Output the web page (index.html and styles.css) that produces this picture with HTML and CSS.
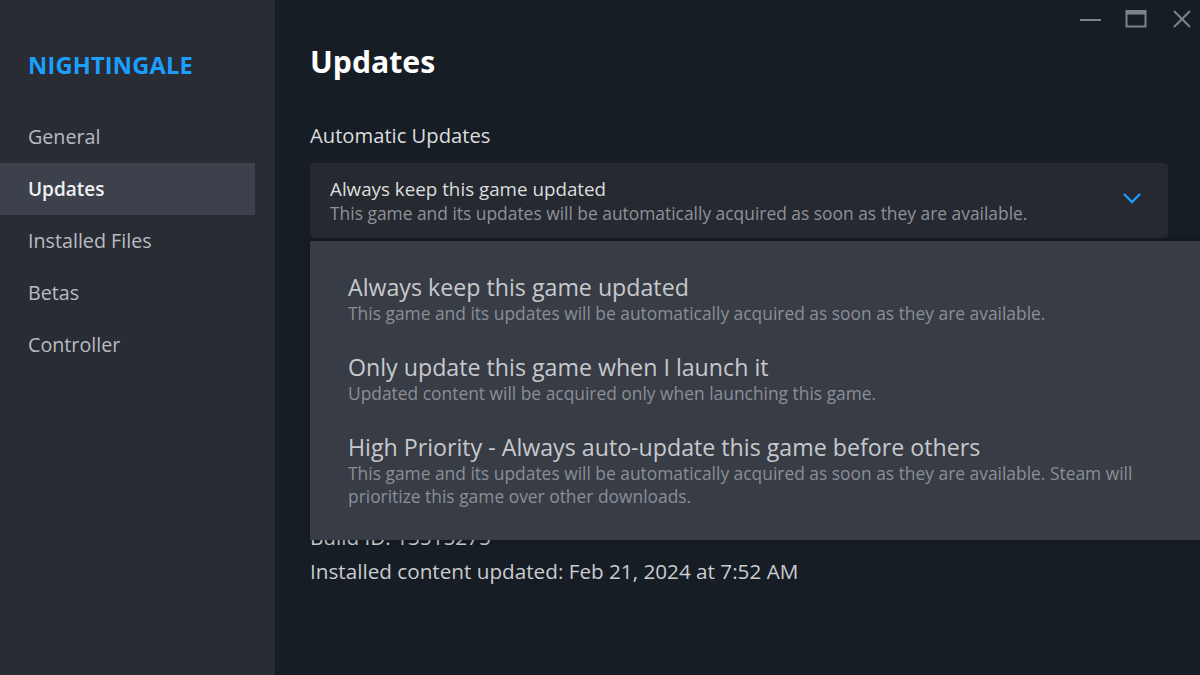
FILE: index.html
```html
<!DOCTYPE html>
<html lang="en">
<head>
<meta charset="utf-8">
<title>Nightingale - Updates</title>
<link rel="stylesheet" href="styles.css">
</head>
<body>
<div class="app">
  <aside class="sidebar">
    <div class="game-title">NIGHTINGALE</div>
    <nav class="nav">
      <div class="nav-item">General</div>
      <div class="nav-item active">Updates</div>
      <div class="nav-item">Installed Files</div>
      <div class="nav-item">Betas</div>
      <div class="nav-item">Controller</div>
    </nav>
  </aside>
  <main class="main">
    <div class="window-controls">
      <svg class="wc" width="24" height="24" viewBox="0 0 24 24"><line x1="2" y1="13" x2="23" y2="13" stroke="#7d838a" stroke-width="2"/></svg>
      <svg class="wc" width="24" height="24" viewBox="0 0 24 24"><rect x="2.5" y="4" width="19" height="15.5" fill="none" stroke="#7d838a" stroke-width="2"/><line x1="2.5" y1="6" x2="21.5" y2="6" stroke="#7d838a" stroke-width="3"/></svg>
      <svg class="wc" width="24" height="24" viewBox="0 0 24 24"><path d="M4 4 L20 20 M20 4 L4 20" stroke="#7d838a" stroke-width="2" fill="none"/></svg>
    </div>
    <h1 class="page-title">Updates</h1>
    <div class="section-label">Automatic Updates</div>
    <div class="select">
      <div class="select-text">
        <div class="select-title">Always keep this game updated</div>
        <div class="select-desc">This game and its updates will be automatically acquired as soon as they are available.</div>
      </div>
      <svg class="chevron" width="20" height="12" viewBox="0 0 20 12"><path d="M2 2 L10 10 L18 2" fill="none" stroke="#1a9fff" stroke-width="2.4"/></svg>
    </div>
    <div class="hidden-space"></div>
    <div class="info">Build ID: 13515275</div>
    <div class="info">Installed content updated: Feb 21, 2024 at 7:52 AM</div>

    <div class="menu">
      <div class="menu-item">
        <div class="menu-title">Always keep this game updated</div>
        <div class="menu-desc">This game and its updates will be automatically acquired as soon as they are available.</div>
      </div>
      <div class="menu-item">
        <div class="menu-title">Only update this game when I launch it</div>
        <div class="menu-desc">Updated content will be acquired only when launching this game.</div>
      </div>
      <div class="menu-item">
        <div class="menu-title">High Priority - Always auto-update this game before others</div>
        <div class="menu-desc">This game and its updates will be automatically acquired as soon as they are available. Steam will prioritize this game over other downloads.</div>
      </div>
    </div>
  </main>
</div>
</body>
</html>
```
FILE: styles.css
```css
* { box-sizing: border-box; }
html, body { margin: 0; padding: 0; }
body {
  width: 1200px;
  height: 675px;
  overflow: hidden;
  background: #171d25;
  font-family: "Open Sans", "Noto Sans", sans-serif;
  color: #dcdedf;
}
.app {
  display: flex;
  height: 675px;
}
.sidebar {
  width: 275px;
  flex: none;
  background: #292c33;
  padding-top: 49px;
}
.game-title {
  padding-left: 28px;
  color: #1a9fff;
  font-weight: 700;
  font-size: 23.6px;
  line-height: 32px;
  letter-spacing: 0.2px;
  height: 62px;
}
.nav {
  margin-right: 20px;
}
.nav-item {
  height: 52px;
  line-height: 52px;
  padding-left: 28px;
  font-size: 19.7px;
  color: #b8bcc2;
}
.nav-item.active {
  background: #3d414b;
  color: #eef0f2;
  font-weight: 600;
  font-size: 19px;
}
.main {
  flex: 1;
  position: relative;
  padding: 0 32px 0 35px;
}
.window-controls {
  position: absolute;
  top: 7px;
  right: 6px;
  display: flex;
  gap: 22px;
}
.page-title {
  margin: 0;
  padding-top: 42px;
  font-size: 30.2px;
  line-height: 40px;
  font-weight: 700;
  color: #ffffff;
}
.section-label {
  margin-top: 41px;
  font-size: 20.2px;
  line-height: 24px;
  color: #dcdedf;
}
.select {
  margin-top: 16px;
  height: 75px;
  background: #262930;
  border-radius: 4px;
  display: flex;
  align-items: center;
  padding: 0 26px 0 20px;
}
.select-text { flex: 1; }
.select-title {
  font-size: 18.8px;
  line-height: 22px;
  color: #dcdedf;
}
.select-desc {
  font-size: 17.4px;
  line-height: 22px;
  margin-top: 2px;
  color: #8d9299;
}
.chevron { margin-top: -6px; }
.hidden-space { height: 282px; }
.info {
  font-size: 20.7px;
  line-height: 34px;
  color: #c9ccd0;
}
.menu {
  position: absolute;
  left: 35px;
  right: 0;
  top: 241px;
  height: 299px;
  background: #383c45;
  padding: 32px 38px 0 38px;
  box-shadow: 0 0 6px rgba(0,0,0,0.35);
}
.menu-item {
  margin-bottom: 28px;
}
.menu-title {
  font-size: 23.2px;
  line-height: 29px;
  color: #c7c9cd;
}
.menu-desc {
  font-size: 17.4px;
  line-height: 23px;
  color: #8a8f97;
}
```
